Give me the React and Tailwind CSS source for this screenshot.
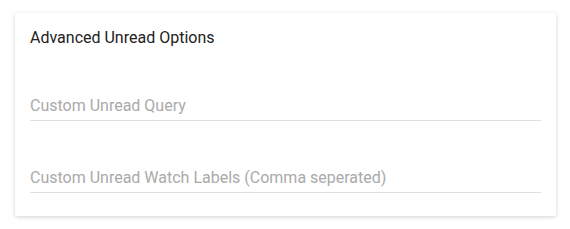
export default function App() {
  return (
    <div className="min-h-[229px] bg-white pt-[13px] pl-[15px] font-['Roboto',sans-serif]">
      <div className="w-[541px] h-[203px] rounded-[2px] bg-white shadow-[0_1px_4px_rgba(0,0,0,0.18)] px-[15px] pt-[15px]">
        <h2 className="text-[16px] leading-[19px] text-[#222]">Advanced Unread Options</h2>
        <input
          className="mt-[43px] block w-full h-[31px] border-b border-[#e0e0e0] text-[16px] text-[#333] placeholder:text-[#aaaaaa] outline-none"
          placeholder="Custom Unread Query"
        />
        <input
          className="mt-[41px] block w-full h-[31px] border-b border-[#e0e0e0] text-[16px] text-[#333] placeholder:text-[#aaaaaa] outline-none"
          placeholder="Custom Unread Watch Labels (Comma seperated)"
        />
      </div>
    </div>
  );
}
